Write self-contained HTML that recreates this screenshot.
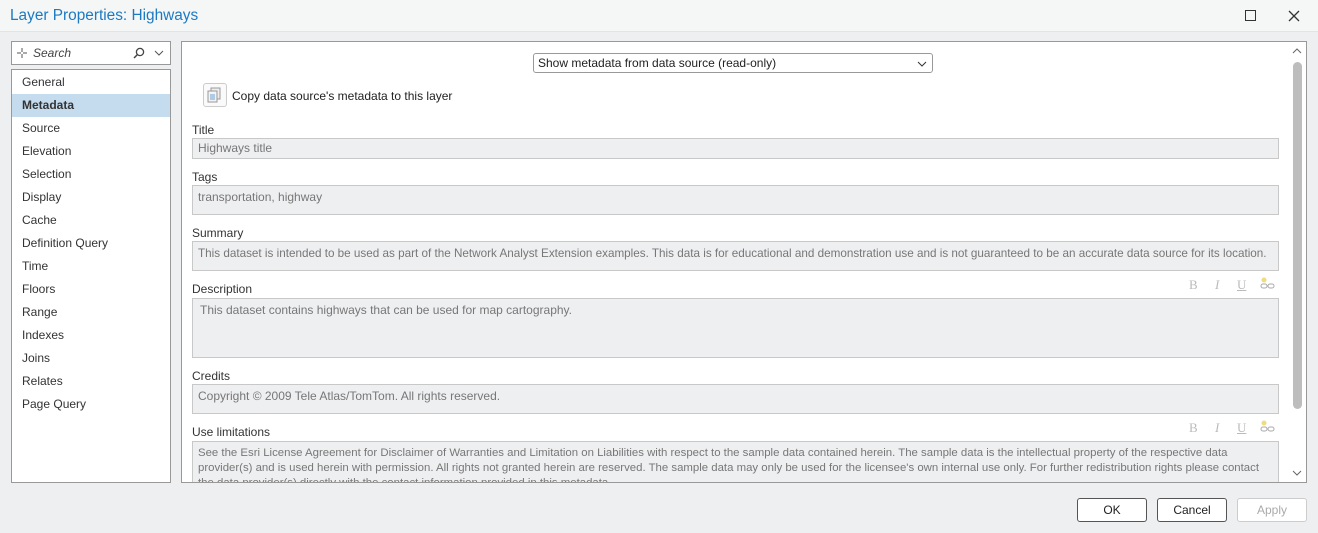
<!DOCTYPE html>
<html><head><meta charset="utf-8"><style>
*{box-sizing:border-box;margin:0;padding:0}
body{width:1318px;height:533px;background:#eeeff1;font-family:"Liberation Sans",sans-serif;font-size:12px;color:#333;position:relative;overflow:hidden}
.abs{position:absolute}
.tb{left:0;top:0;width:1318px;height:32px;background:#f5f6f6;border-bottom:1px solid #e4e4e4}
.title{left:10px;top:7px;font-size:15.4px;color:#1c7ac2}
.search{left:11px;top:41px;width:160px;height:24px;background:#fff;border:1px solid #999}
.nav{left:11px;top:69px;width:160px;height:414px;background:#fff;border:1px solid #999}
.nav div{height:23px;line-height:23px;padding-left:10px;color:#333}
.nav .sel{background:#c5dcef;font-weight:bold}
.panel{left:181px;top:41px;width:1126px;height:442px;background:#fff;border:1px solid #999;overflow:hidden}
.lbl{left:10px;color:#333}
.box{left:10px;width:1087px;background:#eeeff1;border:1px solid #c8c8c8;color:#777;padding:4px 5px;line-height:15px;overflow:hidden}
.btn{top:498px;height:24px;width:70px;border:1px solid #555;border-radius:3px;background:#fff;text-align:center;line-height:22px;color:#222}
.fmt{color:#bbb;font-family:"Liberation Serif",serif;font-size:13px}
</style></head><body>
<div class="abs tb"></div>
<div class="abs title">Layer Properties: Highways</div>
<div class="abs" style="left:1245px;top:10px;width:11px;height:11px;border:1.3px solid #333"></div>
<svg class="abs" style="left:1288px;top:10px" width="12" height="12"><path d="M1 1L11 11M11 1L1 11" stroke="#333" stroke-width="1.3"/></svg>
<div class="abs search">
<svg class="abs" style="left:4px;top:5px" width="12" height="12"><path d="M6 1V5M6 7V11M1 6H5M7 6H11" stroke="#555" stroke-width="1"/></svg>
<span class="abs" style="left:21px;top:4px;font-style:italic;color:#444">Search</span>
<svg class="abs" style="left:120px;top:4px" width="14" height="14"><circle cx="8" cy="6" r="3.6" fill="none" stroke="#444" stroke-width="1.3"/><path d="M5.5 8.5L2 12" stroke="#444" stroke-width="1.5"/></svg>
<svg class="abs" style="left:142px;top:7px" width="10" height="8"><path d="M1 2L5 6L9 2" fill="none" stroke="#555"/></svg>
</div>
<div class="abs nav"><div style="height:1px"></div>
<div>General</div><div class="sel">Metadata</div><div>Source</div><div>Elevation</div><div>Selection</div><div>Display</div><div>Cache</div><div>Definition Query</div><div>Time</div><div>Floors</div><div>Range</div><div>Indexes</div><div>Joins</div><div>Relates</div><div>Page Query</div>
</div>
<div class="abs panel">
<div class="abs" style="left:351px;top:11px;width:400px;height:20px;border:1px solid #999;border-radius:3px;padding:2px 4px;color:#222">Show metadata from data source (read-only)
<svg class="abs" style="left:383px;top:6px" width="10" height="8"><path d="M1 2L5 6L9 2" fill="none" stroke="#333"/></svg></div>
<div class="abs" style="left:21px;top:41px;width:24px;height:24px;border:1px solid #ccc;border-radius:3px;background:#fafafa">
<svg width="22" height="22"><rect x="7" y="4" width="9" height="11" fill="#eee" stroke="#999"/><rect x="4" y="7" width="9" height="11" fill="#f4f4f4" stroke="#999"/><path d="M6 11h5M6 13h5M6 15h5" stroke="#6aa0d8"/></svg></div>
<div class="abs" style="left:50px;top:47px;color:#222">Copy data source's metadata to this layer</div>
<div class="abs lbl" style="top:81px">Title</div>
<div class="abs box" style="top:96px;height:21px;padding-top:2px">Highways title</div>
<div class="abs lbl" style="top:128px">Tags</div>
<div class="abs box" style="top:143px;height:30px">transportation, highway</div>
<div class="abs lbl" style="top:184px">Summary</div>
<div class="abs box" style="top:199px;height:30px;font-size:11.7px;white-space:nowrap">This dataset is intended to be used as part of the Network Analyst Extension examples. This data is for educational and demonstration use and is not guaranteed to be an accurate data source for its location.</div>
<div class="abs lbl" style="top:240px">Description</div>
<div class="abs fmt" style="left:1007px;top:235px">B</div><div class="abs fmt" style="left:1033px;top:235px;font-style:italic">I</div><div class="abs fmt" style="left:1055px;top:235px;text-decoration:underline">U</div>
<svg class="abs" style="left:1077px;top:234px" width="18" height="14"><circle cx="5" cy="4" r="2.5" fill="#f0dc80"/><rect x="2" y="8" width="6" height="4" rx="2" fill="none" stroke="#aaa"/><rect x="9" y="8" width="6" height="4" rx="2" fill="none" stroke="#aaa"/></svg>
<div class="abs box" style="top:256px;height:60px;padding-left:7px">This dataset contains highways that can be used for map cartography.</div>
<div class="abs lbl" style="top:327px">Credits</div>
<div class="abs box" style="top:342px;height:30px">Copyright © 2009 Tele Atlas/TomTom. All rights reserved.</div>
<div class="abs lbl" style="top:383px">Use limitations</div>
<div class="abs fmt" style="left:1007px;top:378px">B</div><div class="abs fmt" style="left:1033px;top:378px;font-style:italic">I</div><div class="abs fmt" style="left:1055px;top:378px;text-decoration:underline">U</div>
<svg class="abs" style="left:1077px;top:377px" width="18" height="14"><circle cx="5" cy="4" r="2.5" fill="#f0dc80"/><rect x="2" y="8" width="6" height="4" rx="2" fill="none" stroke="#aaa"/><rect x="9" y="8" width="6" height="4" rx="2" fill="none" stroke="#aaa"/></svg>
<div class="abs box" style="top:399px;height:60px;font-size:11.4px">See the Esri License Agreement for Disclaimer of Warranties and Limitation on Liabilities with respect to the sample data contained herein. The sample data is the intellectual property of the respective data provider(s) and is used herein with permission. All rights not granted herein are reserved. The sample data may only be used for the licensee's own internal use only. For further redistribution rights please contact the data provider(s) directly with the contact information provided in this metadata.</div>
<svg class="abs" style="left:1110px;top:5px" width="10" height="8"><path d="M1 6L5 2L9 6" fill="none" stroke="#666"/></svg>
<div class="abs" style="left:1111px;top:20px;width:9px;height:347px;background:#bdbdbd;border-radius:5px"></div>
<svg class="abs" style="left:1110px;top:427px" width="10" height="8"><path d="M1 2L5 6L9 2" fill="none" stroke="#666"/></svg>
</div>
<div class="abs btn" style="left:1077px">OK</div>
<div class="abs btn" style="left:1157px">Cancel</div>
<div class="abs btn" style="left:1237px;border-color:#ccc;color:#aaa">Apply</div>
</body></html>
